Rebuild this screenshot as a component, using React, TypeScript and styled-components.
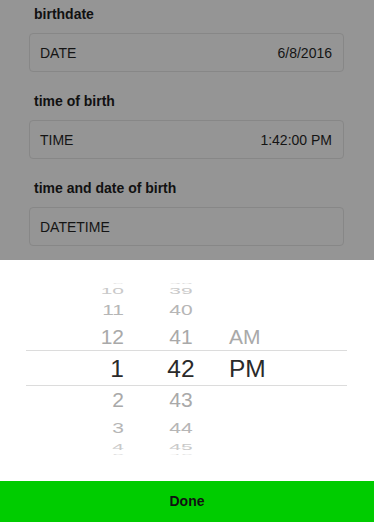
import React from "react";
import styled, { createGlobalStyle } from "styled-components";

const GlobalStyle = createGlobalStyle`
  html, body {
    margin: 0;
    padding: 0;
    background: #ffffff;
  }
  body {
    font-family: "Liberation Sans", Arial, sans-serif;
  }
`;

const RADIUS = 86;
const STEP = (21.5 * Math.PI) / 180;
const BASELINE_SHIFT = 2;

const fields = [
  { label: "birthdate", name: "DATE", value: "6/8/2016" },
  { label: "time of birth", name: "TIME", value: "1:42:00 PM" },
  { label: "time and date of birth", name: "DATETIME", value: "" },
];

const hours = ["9", "10", "11", "12", "1", "2", "3", "4", "5"];
const minutes = ["38", "39", "40", "41", "42", "43", "44", "45", "46"];
const periods = ["AM", "PM"];

const fadeColors = ["#2a2a2a", "#a9a9a9", "#b6b6b6", "#c9c9c9", "#e0e0e0"];

type WheelColumnProps = {
  items: string[];
  selected: number;
  align: "left" | "center" | "right";
  width: number;
  offset: number;
};

const WheelColumn: React.FC<WheelColumnProps> = ({
  items,
  selected,
  align,
  width,
  offset,
}) => (
  <Column $align={align} $width={width} $offset={offset}>
    {items.map((item, i) => {
      const k = i - selected;
      const angle = k * STEP;
      const y = RADIUS * Math.sin(angle) + BASELINE_SHIFT;
      const scale = Math.max(Math.cos(angle), 0.05);
      return (
        <WheelItem
          key={item}
          $active={k === 0}
          $color={fadeColors[Math.min(Math.abs(k), 4)]}
          style={{ transform: `translateY(${y}px) scaleY(${scale})` }}
        >
          {item}
        </WheelItem>
      );
    })}
  </Column>
);

export default function App() {
  return (
    <>
      <GlobalStyle />
      <Screen>
        <Form>
          {fields.map((f) => (
            <Field key={f.label}>
              <Label>{f.label}</Label>
              <InputBox>
                <span>{f.name}</span>
                <span>{f.value}</span>
              </InputBox>
            </Field>
          ))}
        </Form>

        <PickerPanel>
          <Wheel>
            <WheelColumn items={hours} selected={4} align="right" width={64} offset={60} />
            <WheelColumn items={minutes} selected={4} align="center" width={52} offset={31} />
            <WheelColumn items={periods} selected={1} align="left" width={60} offset={22} />
            <SelectionBand />
          </Wheel>
        </PickerPanel>

        <DoneButton>Done</DoneButton>
      </Screen>
    </>
  );
}

const Screen = styled.div`
  width: 374px;
  height: 522px;
  display: flex;
  flex-direction: column;
  overflow: hidden;
`;

const Form = styled.div`
  height: 260px;
  box-sizing: border-box;
  padding: 4px 30px 0 29px;
  background: #959595;
  display: flex;
  flex-direction: column;
  gap: 19px;
`;

const Field = styled.div`
  display: flex;
  flex-direction: column;
  gap: 9px;
`;

const Label = styled.div`
  padding-left: 5px;
  height: 20px;
  line-height: 20px;
  font-size: 14px;
  font-weight: 700;
  color: #111111;
`;

const InputBox = styled.div`
  height: 39px;
  box-sizing: border-box;
  border: 1px solid #878787;
  border-radius: 4px;
  padding: 0 11px 0 10px;
  display: flex;
  align-items: center;
  justify-content: space-between;
  font-size: 14px;
  color: #141414;
`;

const PickerPanel = styled.div`
  height: 221px;
  box-sizing: border-box;
  padding: 16px 0 23px;
  background: #ffffff;
`;

const Wheel = styled.div`
  position: relative;
  height: 182px;
  display: flex;
  overflow: hidden;
`;

const Column = styled.div<{
  $align: "left" | "center" | "right";
  $width: number;
  $offset: number;
}>`
  display: grid;
  width: ${(p) => p.$width}px;
  margin-left: ${(p) => p.$offset}px;
  height: 100%;
  justify-items: ${(p) =>
    p.$align === "left" ? "start" : p.$align === "right" ? "end" : "center"};
`;

const WheelItem = styled.div<{ $active: boolean; $color: string }>`
  grid-area: 1 / 1;
  align-self: center;
  font-size: ${(p) => (p.$active ? "24.5px" : "21px")};
  line-height: 28px;
  color: ${(p) => p.$color};
  white-space: nowrap;
`;

const SelectionBand = styled.div`
  position: absolute;
  left: 26px;
  right: 27px;
  top: 74px;
  height: 36px;
  box-sizing: border-box;
  border-top: 1px solid #dcdcdc;
  border-bottom: 1px solid #dcdcdc;
  pointer-events: none;
`;

const DoneButton = styled.div`
  height: 41px;
  background: #00cc00;
  display: flex;
  align-items: center;
  justify-content: center;
  padding-bottom: 2px;
  box-sizing: border-box;
  font-size: 14px;
  font-weight: 700;
  color: #111111;
`;
